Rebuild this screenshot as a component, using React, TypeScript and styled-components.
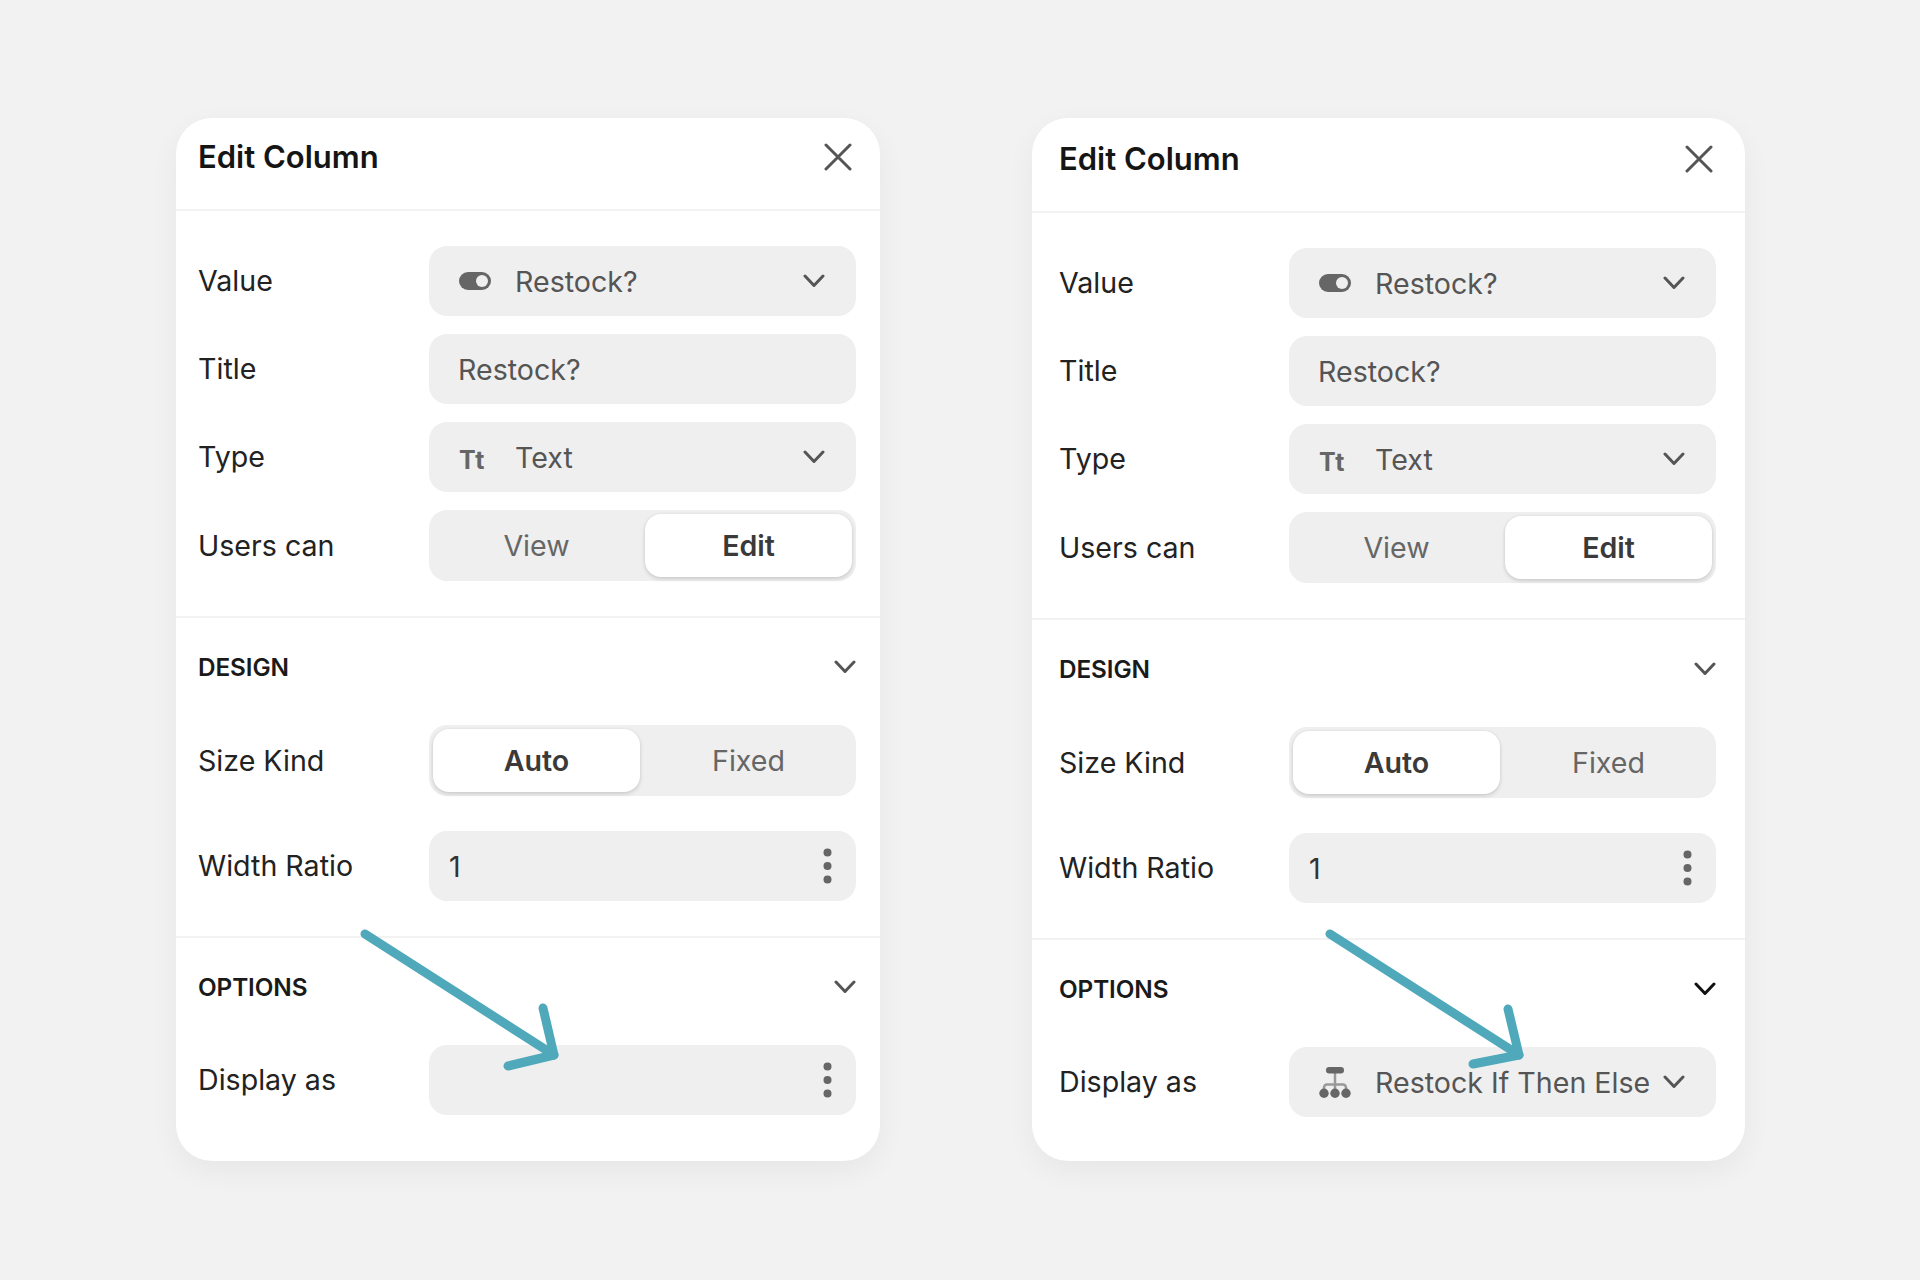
import React from 'react';
import styled, { createGlobalStyle } from 'styled-components';

const Global = createGlobalStyle`
  html, body { margin: 0; padding: 0; background: #f2f2f2; }
  body { font-family: Inter, "Liberation Sans", sans-serif; }
`;

const Page = styled.div`
  width: 1920px;
  height: 1280px;
  box-sizing: border-box;
  padding: 118px 0 0 176px;
  display: flex;
  align-items: flex-start;
  gap: 152px;
  overflow: hidden;
`;

const Card = styled.section<{ $wide?: boolean }>`
  position: relative;
  box-sizing: border-box;
  width: ${(p) => (p.$wide ? 713 : 704)}px;
  height: 1043px;
  background: #fff;
  border-radius: 36px;
  box-shadow: 0 10px 30px rgba(0, 0, 0, 0.05);
`;

const Header = styled.header<{ $wide?: boolean }>`
  box-sizing: border-box;
  height: ${(p) => (p.$wide ? 95 : 93)}px;
  padding: ${(p) => (p.$wide ? '0 32px 12px 27px' : '0 28px 14px 22px')};
  display: flex;
  align-items: center;
  justify-content: space-between;
  border-bottom: 2px solid #f2f2f2;
`;

const Title = styled.h2`
  margin: 0;
  font-size: 31px;
  line-height: 36px;
  font-weight: 600;
  color: #151515;
`;

const Section = styled.div<{ $wide?: boolean; $last?: boolean }>`
  box-sizing: border-box;
  padding: ${(p) => (p.$wide ? '0 29px 0 27px' : '0 24px 0 22px')};
  ${(p) => (p.$last ? '' : 'border-bottom: 2px solid #f2f2f2;')}
`;

const TopRows = styled.div`
  display: flex;
  flex-direction: column;
  gap: 18px;
  padding: 35px 0;
`;

const SectionHead = styled.div`
  height: 48px;
  margin-top: 25px;
  display: flex;
  align-items: center;
  justify-content: space-between;
`;

const SectionName = styled.h3`
  margin: 0;
  font-size: 24.3px;
  line-height: 30px;
  font-weight: 600;
  color: #1a1a1a;
  letter-spacing: -0.1px;
`;

const DesignRows = styled.div`
  display: flex;
  flex-direction: column;
  gap: 35px;
  padding: 34px 0 35px;
`;

const OptionRows = styled.div`
  padding: 34px 0 0;
`;

const Row = styled.div<{ $wide?: boolean }>`
  display: grid;
  grid-template-columns: ${(p) => (p.$wide ? 230 : 231)}px 427px;
  align-items: center;
`;

const Label = styled.span`
  font-size: 28.6px;
  line-height: 34px;
  color: #222;
`;

const Field = styled.div`
  box-sizing: border-box;
  height: 70px;
  border-radius: 18px;
  background: #efefef;
  display: flex;
  align-items: center;
  color: #555;
  font-size: 28.6px;
  overflow: hidden;
`;

const SelectField = styled(Field)`
  padding: 0 31px 0 30px;
`;

const InputField = styled(Field)`
  padding: 0 0 0 29px;
`;

const MoreField = styled(Field)`
  padding: 0 24px 0 20px;
  justify-content: space-between;
  color: #333;
`;

const IconSlot = styled.span`
  flex: 0 0 56px;
  display: flex;
  align-items: center;
`;

const TypeGlyph = styled.span`
  font-size: 25px;
  font-weight: 700;
  line-height: 30px;
  color: #666;
  letter-spacing: 2px;
  transform: translateY(3px);
`;

const SelectText = styled.span`
  flex: 1;
  min-width: 0;
  margin-right: 14px;
  white-space: nowrap;
  overflow: hidden;
`;

const Segments = styled.div`
  box-sizing: border-box;
  height: 71px;
  padding: 4px;
  border-radius: 18px;
  background: #efefef;
  display: grid;
  grid-template-columns: 1fr 1fr;
  gap: 5px;
`;

const Segment = styled.span<{ $active?: boolean }>`
  display: flex;
  align-items: center;
  justify-content: center;
  padding-bottom: 1px;
  border-radius: 16px;
  font-size: 28.6px;
  background: ${(p) => (p.$active ? '#fff' : 'transparent')};
  color: ${(p) => (p.$active ? '#3a3a3a' : '#666')};
  font-weight: ${(p) => (p.$active ? 600 : 400)};
  box-shadow: ${(p) => (p.$active ? '0 2px 4px rgba(0,0,0,0.14), 0 0 3px rgba(0,0,0,0.06)' : 'none')};
`;

const ArrowMark = styled.svg<{ $left: number; $top: number }>`
  position: absolute;
  left: ${(p) => p.$left}px;
  top: ${(p) => p.$top}px;
  overflow: visible;
`;

const Chevron = ({ color = '#555' }: { color?: string }) => (
  <svg width="22" height="14" viewBox="0 0 22 14" fill="none" style={{ flex: 'none' }}>
    <path d="M2 2l9 9.5L20 2" stroke={color} strokeWidth="3" strokeLinecap="round" strokeLinejoin="round" />
  </svg>
);

const CloseIcon = () => (
  <svg width="28" height="28" viewBox="0 0 28 28" fill="none">
    <path d="M2 2l24 24M26 2L2 26" stroke="#555" strokeWidth="3" strokeLinecap="round" />
  </svg>
);

const ToggleIcon = () => (
  <svg width="32" height="18" viewBox="0 0 32 18">
    <rect x="0" y="0" width="32" height="18" rx="9" fill="#666" />
    <circle cx="23" cy="9" r="6" fill="#efefef" />
  </svg>
);

const TreeIcon = () => (
  <svg width="32" height="31" viewBox="0 0 32 31" fill="none">
    <path d="M16 6v12M5 24v-3.5a3 3 0 0 1 3-3h16a3 3 0 0 1 3 3V24M16 17v7" stroke="#999" strokeWidth="2.5" />
    <rect x="7" y="0" width="18" height="6.5" rx="3.2" fill="#666" />
    <circle cx="5" cy="26.2" r="4.7" fill="#666" />
    <circle cx="16" cy="26.2" r="4.7" fill="#666" />
    <circle cx="27" cy="26.2" r="4.7" fill="#666" />
  </svg>
);

const DotsIcon = () => (
  <svg width="9" height="36" viewBox="0 0 9 36" style={{ flex: 'none' }}>
    <circle cx="4.5" cy="4.5" r="4" fill="#666" />
    <circle cx="4.5" cy="18" r="4" fill="#666" />
    <circle cx="4.5" cy="31.5" r="4" fill="#666" />
  </svg>
);

const Arrow = ({ left, top, head }: { left: number; top: number; head: string }) => (
  <ArrowMark $left={left} $top={top} width="200" height="140" viewBox="0 0 200 140" fill="none">
    <path d="M4 4L193 125" stroke="#4fa9bb" strokeWidth="9" strokeLinecap="round" />
    <path d={head} stroke="#4fa9bb" strokeWidth="9" strokeLinecap="round" strokeLinejoin="round" />
  </ArrowMark>
);

const Panel = ({ wide, display }: { wide?: boolean; display?: boolean }) => (
  <Card $wide={wide}>
    <Header $wide={wide}>
      <Title>Edit Column</Title>
      <CloseIcon />
    </Header>
    <Section $wide={wide}>
      <TopRows>
        <Row $wide={wide}>
          <Label>Value</Label>
          <SelectField>
            <IconSlot><ToggleIcon /></IconSlot>
            <SelectText>Restock?</SelectText>
            <Chevron />
          </SelectField>
        </Row>
        <Row $wide={wide}>
          <Label>Title</Label>
          <InputField>Restock?</InputField>
        </Row>
        <Row $wide={wide}>
          <Label>Type</Label>
          <SelectField>
            <IconSlot><TypeGlyph>Tt</TypeGlyph></IconSlot>
            <SelectText>Text</SelectText>
            <Chevron />
          </SelectField>
        </Row>
        <Row $wide={wide}>
          <Label>Users can</Label>
          <Segments>
            <Segment>View</Segment>
            <Segment $active>Edit</Segment>
          </Segments>
        </Row>
      </TopRows>
    </Section>
    <Section $wide={wide}>
      <SectionHead>
        <SectionName>DESIGN</SectionName>
        <Chevron />
      </SectionHead>
      <DesignRows>
        <Row $wide={wide}>
          <Label>Size Kind</Label>
          <Segments>
            <Segment $active>Auto</Segment>
            <Segment>Fixed</Segment>
          </Segments>
        </Row>
        <Row $wide={wide}>
          <Label>Width Ratio</Label>
          <MoreField>
            1
            <DotsIcon />
          </MoreField>
        </Row>
      </DesignRows>
    </Section>
    <Section $wide={wide} $last>
      <SectionHead>
        <SectionName>OPTIONS</SectionName>
        <Chevron color={display ? '#111' : '#555'} />
      </SectionHead>
      <OptionRows>
        <Row $wide={wide}>
          <Label>Display as</Label>
          {display ? (
            <SelectField>
              <IconSlot><TreeIcon /></IconSlot>
              <SelectText>Restock If Then Else</SelectText>
              <Chevron />
            </SelectField>
          ) : (
            <MoreField>
              <span />
              <DotsIcon />
            </MoreField>
          )}
        </Row>
      </OptionRows>
    </Section>
    {wide ? (
      <Arrow left={294} top={812} head="M182 79L193 125 147 134" />
    ) : (
      <Arrow left={185} top={812} head="M182 78L193 125 147 136" />
    )}
  </Card>
);

export default function App() {
  return (
    <>
      <Global />
      <Page>
        <Panel />
        <Panel wide display />
      </Page>
    </>
  );
}
